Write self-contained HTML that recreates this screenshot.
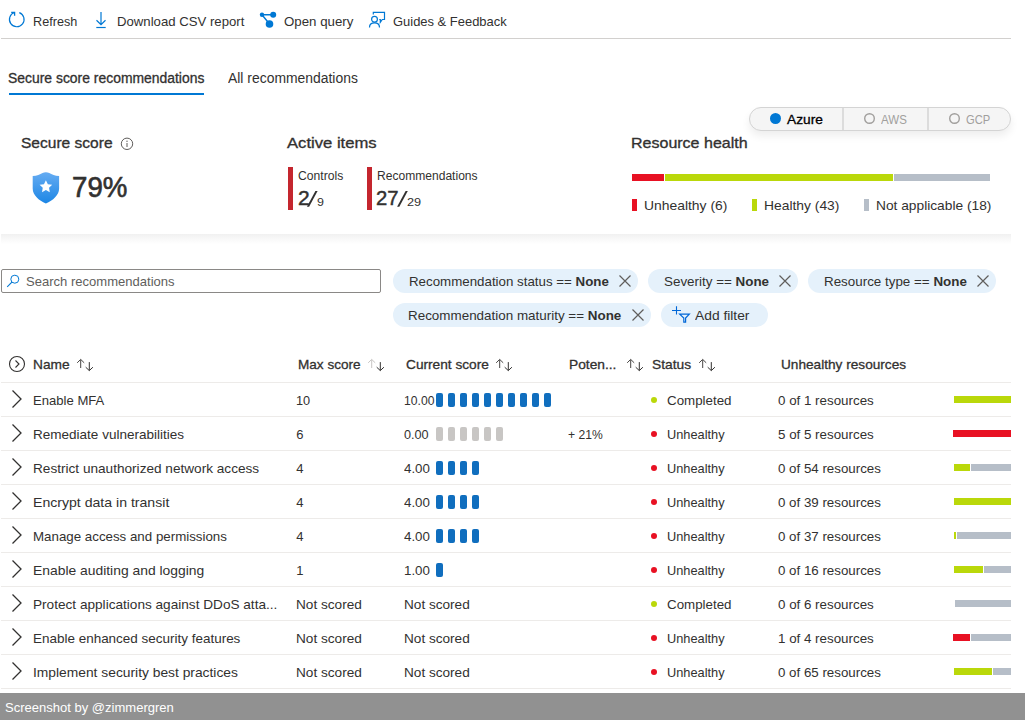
<!DOCTYPE html>
<html><head><meta charset="utf-8"><title>Secure score recommendations</title>
<style>
html,body{margin:0;padding:0;background:#fff;width:1025px;height:720px;overflow:hidden;position:relative;font-family:"Liberation Sans",sans-serif;}
.t{position:absolute;white-space:nowrap;transform-origin:0 0;}
.r{position:absolute;}
</style></head><body>
<!-- toolbar icons -->
<svg class="r" style="left:7px;top:10px" width="20" height="20" viewBox="0 0 20 20">
  <path d="M12.3 2.6 A7.3 7.3 0 1 1 7.5 2.5" fill="none" stroke="#0078d4" stroke-width="1.2"/>
  <path d="M4.2 2.4 H7.6 V5.8" fill="none" stroke="#0078d4" stroke-width="1.3"/>
</svg>
<svg class="r" style="left:94px;top:10px" width="14" height="20" viewBox="0 0 14 20">
  <path d="M7 2 V14.3 M2.5 10.3 L7 14.6 L11.5 10.3" fill="none" stroke="#0078d4" stroke-width="1.2"/>
  <path d="M2.3 17.5 H11.7" fill="none" stroke="#0078d4" stroke-width="1.2"/>
</svg>
<svg class="r" style="left:258px;top:10px" width="20" height="20" viewBox="0 0 20 20">
  <path d="M4 4.8 H15.2 M4 4.8 L11.5 14" fill="none" stroke="#0078d4" stroke-width="1.4"/>
  <circle cx="4" cy="4.8" r="2.2" fill="#0078d4"/>
  <circle cx="15.2" cy="4.8" r="3" fill="#0078d4"/>
  <circle cx="11.5" cy="14" r="3.8" fill="#0078d4"/>
</svg>
<svg class="r" style="left:367px;top:10px" width="20" height="20" viewBox="0 0 20 20">
  <path d="M6.3 4.6 V2.3 H17.5 V9.5 H15.3 L13.3 12.3 V9.5 H12.3" fill="none" stroke="#0078d4" stroke-width="1.2"/>
  <circle cx="7.5" cy="9.2" r="2.9" fill="none" stroke="#0078d4" stroke-width="1.2"/>
  <path d="M2.5 17.4 C2.5 14.5 4.5 12.9 7.5 12.9 C10.5 12.9 12.5 14.5 12.5 17.4" fill="none" stroke="#0078d4" stroke-width="1.2"/>
</svg>
<div class="r" style="left:1px;top:38px;width:1010px;height:1px;background:#d2d0ce"></div>
<!-- tab underline -->
<div class="r" style="left:9px;top:93px;width:195px;height:2px;background:#0078d4"></div>
<!-- card shadow -->
<div class="r" style="left:1px;top:234px;width:1010px;height:10px;background:linear-gradient(#f1f1f1,#fff)"></div>
<!-- info icon -->
<svg class="r" style="left:120px;top:137px" width="14" height="14" viewBox="0 0 14 14">
  <circle cx="7" cy="6.8" r="5.7" fill="none" stroke="#605e5c" stroke-width="1"/>
  <path d="M7 6 V10" stroke="#605e5c" stroke-width="1"/>
  <circle cx="7" cy="4.3" r="0.7" fill="#605e5c"/>
</svg>
<!-- shield -->
<svg class="r" style="left:32px;top:171px" width="28" height="34" viewBox="0 0 28 34">
  <defs><linearGradient id="sg" x1="0" y1="0" x2="0" y2="1"><stop offset="0" stop-color="#66acf2"/><stop offset="1" stop-color="#1c86e5"/></linearGradient></defs>
  <path d="M0.7 5 C5 5 8 3.5 10.5 2 C12.5 0.9 15.3 0.9 17.3 2 C19.8 3.5 23 5 27.1 5 V17.5 C27.1 24 21 29.5 13.9 32.6 C6.8 29.5 0.7 24 0.7 17.5 Z" fill="url(#sg)"/>
  <path d="M13.90 9.20 L15.84 13.13 L20.18 13.76 L17.04 16.82 L17.78 21.14 L13.90 19.10 L10.02 21.14 L10.76 16.82 L7.62 13.76 L11.96 13.13 Z" fill="#fff"/>
</svg>
<!-- active items bars -->
<svg class="r" style="left:0;top:0" width="450" height="220"><path d="M306.9 206.7 H309.1 L317.6 190.9 H315.4 Z" fill="#323130"/><path d="M397.1 206.7 H399.3 L407.8 190.9 H405.6 Z" fill="#323130"/></svg>
<div class="r" style="left:288px;top:167px;width:5px;height:43px;background:#c4262e"></div>
<div class="r" style="left:367px;top:167px;width:5px;height:43px;background:#c4262e"></div>
<!-- resource health bar -->
<div class="r" style="left:632px;top:174px;width:32px;height:7px;background:#e81123"></div>
<div class="r" style="left:665px;top:174px;width:228px;height:7px;background:#bad80a"></div>
<div class="r" style="left:894px;top:174px;width:96px;height:7px;background:#b6bec8"></div>
<div class="r" style="left:632px;top:199px;width:5px;height:12px;background:#e81123"></div>
<div class="r" style="left:752px;top:199px;width:5px;height:12px;background:#bad80a"></div>
<div class="r" style="left:864px;top:199px;width:5px;height:12px;background:#b6bec8"></div>
<!-- cloud toggle -->
<div class="r" style="left:749px;top:107px;width:260px;height:22px;border:1px solid #d4d4d4;border-radius:12px;background:#f5f5f5;box-shadow:0 5px 9px rgba(0,0,0,0.07)"></div>
<div class="r" style="left:842px;top:108px;width:2px;height:22px;background:#dcdcdc"></div>
<div class="r" style="left:927px;top:108px;width:2px;height:22px;background:#dcdcdc"></div>
<div class="r" style="left:770px;top:113px;width:11px;height:11px;border-radius:6px;background:#0078d4"></div>
<svg class="r" style="left:863px;top:112px" width="13" height="13" viewBox="0 0 13 13"><circle cx="6.5" cy="6.5" r="4.8" fill="none" stroke="#a19f9d" stroke-width="1.4"/></svg>
<svg class="r" style="left:948px;top:112px" width="13" height="13" viewBox="0 0 13 13"><circle cx="6.5" cy="6.5" r="4.8" fill="none" stroke="#a19f9d" stroke-width="1.4"/></svg>
<!-- search box -->
<div class="r" style="left:1px;top:269px;width:378px;height:22px;border:1px solid #8a8886;border-radius:2px"></div>
<svg class="r" style="left:6px;top:274px" width="14" height="14" viewBox="0 0 14 14">
  <circle cx="8.8" cy="5.2" r="4" fill="none" stroke="#0078d4" stroke-width="1"/>
  <path d="M5.9 8.1 L1.2 12.8" stroke="#0078d4" stroke-width="1.1"/>
</svg>
<!-- filter pills -->
<div class="r" style="left:393px;top:269px;width:245px;height:24px;border-radius:12px;background:#e5f1fb"></div>
<div class="r" style="left:648px;top:269px;width:150px;height:24px;border-radius:12px;background:#e5f1fb"></div>
<div class="r" style="left:808px;top:269px;width:188px;height:24px;border-radius:12px;background:#e5f1fb"></div>
<div class="r" style="left:393px;top:303px;width:258px;height:24px;border-radius:12px;background:#e5f1fb"></div>
<div class="r" style="left:661px;top:303px;width:107px;height:24px;border-radius:12px;background:#e5f1fb"></div>
<svg class="r" style="left:619px;top:275px" width="12" height="12" viewBox="0 0 12 12"><path d="M0.5 0.5 L11.5 11.5 M11.5 0.5 L0.5 11.5" stroke="#605e5c" stroke-width="1.2"/></svg>
<svg class="r" style="left:779px;top:275px" width="12" height="12" viewBox="0 0 12 12"><path d="M0.5 0.5 L11.5 11.5 M11.5 0.5 L0.5 11.5" stroke="#605e5c" stroke-width="1.2"/></svg>
<svg class="r" style="left:977px;top:275px" width="12" height="12" viewBox="0 0 12 12"><path d="M0.5 0.5 L11.5 11.5 M11.5 0.5 L0.5 11.5" stroke="#605e5c" stroke-width="1.2"/></svg>
<svg class="r" style="left:632px;top:309px" width="12" height="12" viewBox="0 0 12 12"><path d="M0.5 0.5 L11.5 11.5 M11.5 0.5 L0.5 11.5" stroke="#605e5c" stroke-width="1.2"/></svg>
<svg class="r" style="left:671px;top:305px" width="20" height="18" viewBox="0 0 20 18">
  <path d="M5.5 1.2 V9.6 M1 5.5 H10" stroke="#0067d8" stroke-width="1.1"/>
  <path d="M8.7 9.1 H18.3 L14.6 13 V17.1 H12.8 V13 Z" fill="none" stroke="#0067d8" stroke-width="1.2" stroke-linejoin="miter"/>
</svg>
<!-- table header -->
<svg class="r" style="left:8px;top:355px" width="18" height="18" viewBox="0 0 18 18">
  <circle cx="9" cy="9" r="7.5" fill="none" stroke="#323130" stroke-width="1.1"/>
  <path d="M7.5 5.5 L11 9 L7.5 12.5" fill="none" stroke="#323130" stroke-width="1.1"/>
</svg>
<svg class="r" style="left:76px;top:358px" width="18" height="14" viewBox="0 0 18 14">
  <path d="M4.7 1.8 V10 M1.2 4.8 L4.7 1.4 L8.2 4.8" fill="none" stroke="#484644" stroke-width="1"/>
  <path d="M13.3 4.1 V12.5 M9.7 9.2 L13.3 12.6 L16.9 9.2" fill="none" stroke="#323130" stroke-width="1"/>
</svg>
<svg class="r" style="left:367px;top:358px" width="18" height="14" viewBox="0 0 18 14">
  <path d="M4.7 1.8 V10 M1.2 4.8 L4.7 1.4 L8.2 4.8" fill="none" stroke="#c8c6c4" stroke-width="1"/>
  <path d="M13.3 4.1 V12.5 M9.7 9.2 L13.3 12.6 L16.9 9.2" fill="none" stroke="#323130" stroke-width="1"/>
</svg>
<svg class="r" style="left:494.8px;top:358px" width="18" height="14" viewBox="0 0 18 14">
  <path d="M4.7 1.8 V10 M1.2 4.8 L4.7 1.4 L8.2 4.8" fill="none" stroke="#484644" stroke-width="1"/>
  <path d="M13.3 4.1 V12.5 M9.7 9.2 L13.3 12.6 L16.9 9.2" fill="none" stroke="#323130" stroke-width="1"/>
</svg>
<svg class="r" style="left:625.7px;top:358px" width="18" height="14" viewBox="0 0 18 14">
  <path d="M4.7 1.8 V10 M1.2 4.8 L4.7 1.4 L8.2 4.8" fill="none" stroke="#484644" stroke-width="1"/>
  <path d="M13.3 4.1 V12.5 M9.7 9.2 L13.3 12.6 L16.9 9.2" fill="none" stroke="#323130" stroke-width="1"/>
</svg>
<svg class="r" style="left:697.7px;top:358px" width="18" height="14" viewBox="0 0 18 14">
  <path d="M4.7 1.8 V10 M1.2 4.8 L4.7 1.4 L8.2 4.8" fill="none" stroke="#484644" stroke-width="1"/>
  <path d="M13.3 4.1 V12.5 M9.7 9.2 L13.3 12.6 L16.9 9.2" fill="none" stroke="#323130" stroke-width="1"/>
</svg>
<div class="r" style="left:1px;top:382px;width:1010px;height:1px;background:#edebe9"></div>
<!-- footer -->
<div class="r" style="left:0;top:693px;width:1025px;height:27px;background:#919191"></div>

<div class="r" style="left:954px;top:396px;width:57px;height:7px;background:#bad80a"></div>
<div class="r" style="left:953px;top:430px;width:58px;height:7px;background:#e81123"></div>
<div class="r" style="left:954px;top:464px;width:16px;height:7px;background:#bad80a"></div>
<div class="r" style="left:971px;top:464px;width:40px;height:7px;background:#b6bec8"></div>
<div class="r" style="left:954px;top:498px;width:57px;height:7px;background:#bad80a"></div>
<div class="r" style="left:954px;top:532px;width:2px;height:7px;background:#bad80a"></div>
<div class="r" style="left:957px;top:532px;width:54px;height:7px;background:#b6bec8"></div>
<div class="r" style="left:954px;top:566px;width:29px;height:7px;background:#bad80a"></div>
<div class="r" style="left:984px;top:566px;width:27px;height:7px;background:#b6bec8"></div>
<div class="r" style="left:955px;top:600px;width:56px;height:7px;background:#b6bec8"></div>
<div class="r" style="left:953px;top:634px;width:17px;height:7px;background:#e81123"></div>
<div class="r" style="left:971px;top:634px;width:40px;height:7px;background:#b6bec8"></div>
<div class="r" style="left:954px;top:668px;width:38px;height:7px;background:#bad80a"></div>
<div class="r" style="left:993px;top:668px;width:18px;height:7px;background:#b6bec8"></div>
<div class="r" style="left:436px;top:393px;width:7px;height:14px;border-radius:2px;background:#106ebe"></div>
<div class="r" style="left:448px;top:393px;width:7px;height:14px;border-radius:2px;background:#106ebe"></div>
<div class="r" style="left:460px;top:393px;width:7px;height:14px;border-radius:2px;background:#106ebe"></div>
<div class="r" style="left:472px;top:393px;width:7px;height:14px;border-radius:2px;background:#106ebe"></div>
<div class="r" style="left:484px;top:393px;width:7px;height:14px;border-radius:2px;background:#106ebe"></div>
<div class="r" style="left:496px;top:393px;width:7px;height:14px;border-radius:2px;background:#106ebe"></div>
<div class="r" style="left:508px;top:393px;width:7px;height:14px;border-radius:2px;background:#106ebe"></div>
<div class="r" style="left:520px;top:393px;width:7px;height:14px;border-radius:2px;background:#106ebe"></div>
<div class="r" style="left:532px;top:393px;width:7px;height:14px;border-radius:2px;background:#106ebe"></div>
<div class="r" style="left:544px;top:393px;width:7px;height:14px;border-radius:2px;background:#106ebe"></div>
<svg class="r" style="left:11px;top:389px" width="12" height="20" viewBox="0 0 12 20"><path d="M1.5 1.5 L10 10 L1.5 18.5" fill="none" stroke="#323130" stroke-width="1.3"/></svg>
<div class="r" style="left:651px;top:397px;width:6px;height:6px;border-radius:3px;background:#bad80a"></div>
<div class="r" style="left:1px;top:416px;width:1010px;height:1px;background:#edebe9"></div>
<div class="r" style="left:436px;top:427px;width:7px;height:14px;border-radius:2px;background:#c8c6c4"></div>
<div class="r" style="left:448px;top:427px;width:7px;height:14px;border-radius:2px;background:#c8c6c4"></div>
<div class="r" style="left:460px;top:427px;width:7px;height:14px;border-radius:2px;background:#c8c6c4"></div>
<div class="r" style="left:472px;top:427px;width:7px;height:14px;border-radius:2px;background:#c8c6c4"></div>
<div class="r" style="left:484px;top:427px;width:7px;height:14px;border-radius:2px;background:#c8c6c4"></div>
<div class="r" style="left:496px;top:427px;width:7px;height:14px;border-radius:2px;background:#c8c6c4"></div>
<svg class="r" style="left:11px;top:423px" width="12" height="20" viewBox="0 0 12 20"><path d="M1.5 1.5 L10 10 L1.5 18.5" fill="none" stroke="#323130" stroke-width="1.3"/></svg>
<div class="r" style="left:651px;top:431px;width:6px;height:6px;border-radius:3px;background:#e81123"></div>
<div class="r" style="left:1px;top:450px;width:1010px;height:1px;background:#edebe9"></div>
<div class="r" style="left:436px;top:461px;width:7px;height:14px;border-radius:2px;background:#106ebe"></div>
<div class="r" style="left:448px;top:461px;width:7px;height:14px;border-radius:2px;background:#106ebe"></div>
<div class="r" style="left:460px;top:461px;width:7px;height:14px;border-radius:2px;background:#106ebe"></div>
<div class="r" style="left:472px;top:461px;width:7px;height:14px;border-radius:2px;background:#106ebe"></div>
<svg class="r" style="left:11px;top:457px" width="12" height="20" viewBox="0 0 12 20"><path d="M1.5 1.5 L10 10 L1.5 18.5" fill="none" stroke="#323130" stroke-width="1.3"/></svg>
<div class="r" style="left:651px;top:465px;width:6px;height:6px;border-radius:3px;background:#e81123"></div>
<div class="r" style="left:1px;top:484px;width:1010px;height:1px;background:#edebe9"></div>
<div class="r" style="left:436px;top:495px;width:7px;height:14px;border-radius:2px;background:#106ebe"></div>
<div class="r" style="left:448px;top:495px;width:7px;height:14px;border-radius:2px;background:#106ebe"></div>
<div class="r" style="left:460px;top:495px;width:7px;height:14px;border-radius:2px;background:#106ebe"></div>
<div class="r" style="left:472px;top:495px;width:7px;height:14px;border-radius:2px;background:#106ebe"></div>
<svg class="r" style="left:11px;top:491px" width="12" height="20" viewBox="0 0 12 20"><path d="M1.5 1.5 L10 10 L1.5 18.5" fill="none" stroke="#323130" stroke-width="1.3"/></svg>
<div class="r" style="left:651px;top:499px;width:6px;height:6px;border-radius:3px;background:#e81123"></div>
<div class="r" style="left:1px;top:518px;width:1010px;height:1px;background:#edebe9"></div>
<div class="r" style="left:436px;top:529px;width:7px;height:14px;border-radius:2px;background:#106ebe"></div>
<div class="r" style="left:448px;top:529px;width:7px;height:14px;border-radius:2px;background:#106ebe"></div>
<div class="r" style="left:460px;top:529px;width:7px;height:14px;border-radius:2px;background:#106ebe"></div>
<div class="r" style="left:472px;top:529px;width:7px;height:14px;border-radius:2px;background:#106ebe"></div>
<svg class="r" style="left:11px;top:525px" width="12" height="20" viewBox="0 0 12 20"><path d="M1.5 1.5 L10 10 L1.5 18.5" fill="none" stroke="#323130" stroke-width="1.3"/></svg>
<div class="r" style="left:651px;top:533px;width:6px;height:6px;border-radius:3px;background:#e81123"></div>
<div class="r" style="left:1px;top:552px;width:1010px;height:1px;background:#edebe9"></div>
<div class="r" style="left:436px;top:563px;width:7px;height:14px;border-radius:2px;background:#106ebe"></div>
<svg class="r" style="left:11px;top:559px" width="12" height="20" viewBox="0 0 12 20"><path d="M1.5 1.5 L10 10 L1.5 18.5" fill="none" stroke="#323130" stroke-width="1.3"/></svg>
<div class="r" style="left:651px;top:567px;width:6px;height:6px;border-radius:3px;background:#e81123"></div>
<div class="r" style="left:1px;top:586px;width:1010px;height:1px;background:#edebe9"></div>
<svg class="r" style="left:11px;top:593px" width="12" height="20" viewBox="0 0 12 20"><path d="M1.5 1.5 L10 10 L1.5 18.5" fill="none" stroke="#323130" stroke-width="1.3"/></svg>
<div class="r" style="left:651px;top:601px;width:6px;height:6px;border-radius:3px;background:#bad80a"></div>
<div class="r" style="left:1px;top:620px;width:1010px;height:1px;background:#edebe9"></div>
<svg class="r" style="left:11px;top:627px" width="12" height="20" viewBox="0 0 12 20"><path d="M1.5 1.5 L10 10 L1.5 18.5" fill="none" stroke="#323130" stroke-width="1.3"/></svg>
<div class="r" style="left:651px;top:635px;width:6px;height:6px;border-radius:3px;background:#e81123"></div>
<div class="r" style="left:1px;top:654px;width:1010px;height:1px;background:#edebe9"></div>
<svg class="r" style="left:11px;top:661px" width="12" height="20" viewBox="0 0 12 20"><path d="M1.5 1.5 L10 10 L1.5 18.5" fill="none" stroke="#323130" stroke-width="1.3"/></svg>
<div class="r" style="left:651px;top:669px;width:6px;height:6px;border-radius:3px;background:#e81123"></div>
<div class="r" style="left:1px;top:688px;width:1010px;height:1px;background:#edebe9"></div>
<div class="t" style="left:32.98px;top:15.00px;font-size:13px;line-height:13px;font-weight:400;color:#323130;transform:scaleX(0.9722);">Refresh</div>
<div class="t" style="left:116.88px;top:15.00px;font-size:13px;line-height:13px;font-weight:400;color:#323130;transform:scaleX(1.0126);">Download CSV report</div>
<div class="t" style="left:283.98px;top:15.00px;font-size:13px;line-height:13px;font-weight:400;color:#323130;transform:scaleX(1.0204);">Open query</div>
<div class="t" style="left:393.08px;top:15.00px;font-size:13px;line-height:13px;font-weight:400;color:#323130;transform:scaleX(0.9957);">Guides &amp; Feedback</div>
<div class="t" style="left:8.44px;top:71.15px;font-size:14px;line-height:14px;font-weight:400;color:#323130;transform:scaleX(0.9936);-webkit-text-stroke:0.31px #323130;">Secure score recommendations</div>
<div class="t" style="left:227.64px;top:71.15px;font-size:14px;line-height:14px;font-weight:400;color:#323130;transform:scaleX(0.9935);">All recommendations</div>
<div class="t" style="left:20.80px;top:135.30px;font-size:15px;line-height:15px;font-weight:400;color:#323130;transform:scaleX(1.0360);-webkit-text-stroke:0.33px #323130;">Secure score</div>
<div class="t" style="left:72.24px;top:172.75px;font-size:29px;line-height:29px;font-weight:400;color:#323130;transform:scaleX(0.9538);-webkit-text-stroke:0.64px #323130;">79%</div>
<div class="t" style="left:287.40px;top:135.30px;font-size:15px;line-height:15px;font-weight:400;color:#323130;transform:scaleX(1.1089);-webkit-text-stroke:0.33px #323130;">Active items</div>
<div class="t" style="left:297.50px;top:170.42px;font-size:12.5px;line-height:12.5px;font-weight:400;color:#323130;transform:scaleX(0.9714);">Controls</div>
<div class="t" style="left:297.62px;top:188.99px;font-size:19.5px;line-height:19.5px;font-weight:400;color:#323130;transform:scaleX(1.0775);-webkit-text-stroke:0.43px #323130;">2</div>
<div class="t" style="left:317.46px;top:197.19px;font-size:11px;line-height:11px;font-weight:400;color:#323130;transform:scaleX(1.1343);">9</div>
<div class="t" style="left:376.80px;top:170.42px;font-size:12.5px;line-height:12.5px;font-weight:400;color:#323130;transform:scaleX(0.9653);">Recommendations</div>
<div class="t" style="left:376.22px;top:188.99px;font-size:19.5px;line-height:19.5px;font-weight:400;color:#323130;transform:scaleX(1.0378);-webkit-text-stroke:0.43px #323130;">27</div>
<div class="t" style="left:407.04px;top:196.77px;font-size:11.5px;line-height:11.5px;font-weight:400;color:#323130;transform:scaleX(1.1076);">29</div>
<div class="t" style="left:631.40px;top:135.30px;font-size:15px;line-height:15px;font-weight:400;color:#323130;transform:scaleX(1.0674);-webkit-text-stroke:0.33px #323130;">Resource health</div>
<div class="t" style="left:643.88px;top:198.70px;font-size:13px;line-height:13px;font-weight:400;color:#323130;transform:scaleX(1.0684);">Unhealthy (6)</div>
<div class="t" style="left:764.18px;top:198.70px;font-size:13px;line-height:13px;font-weight:400;color:#323130;transform:scaleX(1.0646);">Healthy (43)</div>
<div class="t" style="left:875.88px;top:198.70px;font-size:13px;line-height:13px;font-weight:400;color:#323130;transform:scaleX(1.0573);">Not applicable (18)</div>
<div class="t" style="left:786.78px;top:113.00px;font-size:13px;line-height:13px;font-weight:400;color:#000;transform:scaleX(1.0561);-webkit-text-stroke:0.29px #000;">Azure</div>
<div class="t" style="left:880.98px;top:113.00px;font-size:13px;line-height:13px;font-weight:400;color:#a19f9d;transform:scaleX(0.8872);">AWS</div>
<div class="t" style="left:965.78px;top:113.00px;font-size:13px;line-height:13px;font-weight:400;color:#a19f9d;transform:scaleX(0.8596);">GCP</div>
<div class="t" style="left:25.78px;top:275.00px;font-size:13px;line-height:13px;font-weight:400;color:#605e5c;transform:scaleX(1.0031);">Search recommendations</div>
<div class="t" style="left:408.98px;top:275.00px;font-size:13px;line-height:13px;font-weight:400;color:#323130;transform:scaleX(1.0243);">Recommendation status == <b>None</b></div>
<div class="t" style="left:663.68px;top:275.00px;font-size:13px;line-height:13px;font-weight:400;color:#323130;transform:scaleX(1.0311);">Severity == <b>None</b></div>
<div class="t" style="left:823.78px;top:275.00px;font-size:13px;line-height:13px;font-weight:400;color:#323130;transform:scaleX(1.0296);">Resource type == <b>None</b></div>
<div class="t" style="left:408.48px;top:309.00px;font-size:13px;line-height:13px;font-weight:400;color:#323130;transform:scaleX(1.0324);">Recommendation maturity == <b>None</b></div>
<div class="t" style="left:694.88px;top:309.00px;font-size:13px;line-height:13px;font-weight:400;color:#323130;transform:scaleX(1.0617);">Add filter</div>
<div class="t" style="left:32.98px;top:358.00px;font-size:13px;line-height:13px;font-weight:400;color:#323130;transform:scaleX(1.0543);-webkit-text-stroke:0.29px #323130;">Name</div>
<div class="t" style="left:298.08px;top:358.00px;font-size:13px;line-height:13px;font-weight:400;color:#323130;transform:scaleX(1.0431);-webkit-text-stroke:0.29px #323130;">Max score</div>
<div class="t" style="left:405.68px;top:358.00px;font-size:13px;line-height:13px;font-weight:400;color:#323130;transform:scaleX(1.0523);-webkit-text-stroke:0.29px #323130;">Current score</div>
<div class="t" style="left:568.98px;top:358.00px;font-size:13px;line-height:13px;font-weight:400;color:#323130;transform:scaleX(1.0572);-webkit-text-stroke:0.29px #323130;">Poten...</div>
<div class="t" style="left:652.48px;top:358.00px;font-size:13px;line-height:13px;font-weight:400;color:#323130;transform:scaleX(1.0602);-webkit-text-stroke:0.29px #323130;">Status</div>
<div class="t" style="left:780.78px;top:358.00px;font-size:13px;line-height:13px;font-weight:400;color:#323130;transform:scaleX(1.0489);-webkit-text-stroke:0.29px #323130;">Unhealthy resources</div>
<div class="t" style="left:32.98px;top:394.00px;font-size:13px;line-height:13px;font-weight:400;color:#323130;transform:scaleX(1.0068);">Enable MFA</div>
<div class="t" style="left:296.28px;top:394.00px;font-size:13px;line-height:13px;font-weight:400;color:#323130;transform:scaleX(0.9796);">10</div>
<div class="t" style="left:404.48px;top:394.00px;font-size:13px;line-height:13px;font-weight:400;color:#323130;transform:scaleX(0.9345);">10.00</div>
<div class="t" style="left:666.88px;top:394.00px;font-size:13px;line-height:13px;font-weight:400;color:#323130;transform:scaleX(1.0264);">Completed</div>
<div class="t" style="left:778.48px;top:394.00px;font-size:13px;line-height:13px;font-weight:400;color:#323130;transform:scaleX(1.0270);">0 of 1 resources</div>
<div class="t" style="left:32.98px;top:428.00px;font-size:13px;line-height:13px;font-weight:400;color:#323130;transform:scaleX(1.0399);">Remediate vulnerabilities</div>
<div class="t" style="left:296.28px;top:428.00px;font-size:13px;line-height:13px;font-weight:400;color:#323130;">6</div>
<div class="t" style="left:404.48px;top:428.00px;font-size:13px;line-height:13px;font-weight:400;color:#323130;transform:scaleX(0.9745);">0.00</div>
<div class="t" style="left:567.98px;top:428.00px;font-size:13px;line-height:13px;font-weight:400;color:#323130;transform:scaleX(0.9323);">+ 21%</div>
<div class="t" style="left:666.88px;top:428.00px;font-size:13px;line-height:13px;font-weight:400;color:#323130;transform:scaleX(0.9835);">Unhealthy</div>
<div class="t" style="left:778.48px;top:428.00px;font-size:13px;line-height:13px;font-weight:400;color:#323130;transform:scaleX(1.0270);">5 of 5 resources</div>
<div class="t" style="left:32.98px;top:462.00px;font-size:13px;line-height:13px;font-weight:400;color:#323130;transform:scaleX(1.0468);">Restrict unauthorized network access</div>
<div class="t" style="left:296.28px;top:462.00px;font-size:13px;line-height:13px;font-weight:400;color:#323130;">4</div>
<div class="t" style="left:404.48px;top:462.00px;font-size:13px;line-height:13px;font-weight:400;color:#323130;transform:scaleX(1.0245);">4.00</div>
<div class="t" style="left:666.88px;top:462.00px;font-size:13px;line-height:13px;font-weight:400;color:#323130;transform:scaleX(0.9835);">Unhealthy</div>
<div class="t" style="left:778.48px;top:462.00px;font-size:13px;line-height:13px;font-weight:400;color:#323130;transform:scaleX(1.0247);">0 of 54 resources</div>
<div class="t" style="left:32.98px;top:496.00px;font-size:13px;line-height:13px;font-weight:400;color:#323130;transform:scaleX(1.0841);">Encrypt data in transit</div>
<div class="t" style="left:296.28px;top:496.00px;font-size:13px;line-height:13px;font-weight:400;color:#323130;">4</div>
<div class="t" style="left:404.48px;top:496.00px;font-size:13px;line-height:13px;font-weight:400;color:#323130;transform:scaleX(1.0245);">4.00</div>
<div class="t" style="left:666.88px;top:496.00px;font-size:13px;line-height:13px;font-weight:400;color:#323130;transform:scaleX(0.9835);">Unhealthy</div>
<div class="t" style="left:778.48px;top:496.00px;font-size:13px;line-height:13px;font-weight:400;color:#323130;transform:scaleX(1.0247);">0 of 39 resources</div>
<div class="t" style="left:32.98px;top:530.00px;font-size:13px;line-height:13px;font-weight:400;color:#323130;transform:scaleX(1.0243);">Manage access and permissions</div>
<div class="t" style="left:296.28px;top:530.00px;font-size:13px;line-height:13px;font-weight:400;color:#323130;">4</div>
<div class="t" style="left:404.48px;top:530.00px;font-size:13px;line-height:13px;font-weight:400;color:#323130;transform:scaleX(1.0245);">4.00</div>
<div class="t" style="left:666.88px;top:530.00px;font-size:13px;line-height:13px;font-weight:400;color:#323130;transform:scaleX(0.9835);">Unhealthy</div>
<div class="t" style="left:778.48px;top:530.00px;font-size:13px;line-height:13px;font-weight:400;color:#323130;transform:scaleX(1.0247);">0 of 37 resources</div>
<div class="t" style="left:32.98px;top:564.00px;font-size:13px;line-height:13px;font-weight:400;color:#323130;transform:scaleX(1.0668);">Enable auditing and logging</div>
<div class="t" style="left:296.28px;top:564.00px;font-size:13px;line-height:13px;font-weight:400;color:#323130;">1</div>
<div class="t" style="left:404.48px;top:564.00px;font-size:13px;line-height:13px;font-weight:400;color:#323130;transform:scaleX(1.0245);">1.00</div>
<div class="t" style="left:666.88px;top:564.00px;font-size:13px;line-height:13px;font-weight:400;color:#323130;transform:scaleX(0.9835);">Unhealthy</div>
<div class="t" style="left:778.48px;top:564.00px;font-size:13px;line-height:13px;font-weight:400;color:#323130;transform:scaleX(1.0247);">0 of 16 resources</div>
<div class="t" style="left:32.98px;top:598.00px;font-size:13px;line-height:13px;font-weight:400;color:#323130;transform:scaleX(1.0469);">Protect applications against DDoS atta...</div>
<div class="t" style="left:296.38px;top:598.00px;font-size:13px;line-height:13px;font-weight:400;color:#323130;transform:scaleX(1.0475);">Not scored</div>
<div class="t" style="left:404.28px;top:598.00px;font-size:13px;line-height:13px;font-weight:400;color:#323130;transform:scaleX(1.0459);">Not scored</div>
<div class="t" style="left:666.88px;top:598.00px;font-size:13px;line-height:13px;font-weight:400;color:#323130;transform:scaleX(1.0264);">Completed</div>
<div class="t" style="left:778.48px;top:598.00px;font-size:13px;line-height:13px;font-weight:400;color:#323130;transform:scaleX(1.0270);">0 of 6 resources</div>
<div class="t" style="left:32.98px;top:632.00px;font-size:13px;line-height:13px;font-weight:400;color:#323130;transform:scaleX(1.0358);">Enable enhanced security features</div>
<div class="t" style="left:296.38px;top:632.00px;font-size:13px;line-height:13px;font-weight:400;color:#323130;transform:scaleX(1.0475);">Not scored</div>
<div class="t" style="left:404.28px;top:632.00px;font-size:13px;line-height:13px;font-weight:400;color:#323130;transform:scaleX(1.0459);">Not scored</div>
<div class="t" style="left:666.88px;top:632.00px;font-size:13px;line-height:13px;font-weight:400;color:#323130;transform:scaleX(0.9835);">Unhealthy</div>
<div class="t" style="left:778.48px;top:632.00px;font-size:13px;line-height:13px;font-weight:400;color:#323130;transform:scaleX(1.0270);">1 of 4 resources</div>
<div class="t" style="left:32.98px;top:666.00px;font-size:13px;line-height:13px;font-weight:400;color:#323130;transform:scaleX(1.0621);">Implement security best practices</div>
<div class="t" style="left:296.38px;top:666.00px;font-size:13px;line-height:13px;font-weight:400;color:#323130;transform:scaleX(1.0475);">Not scored</div>
<div class="t" style="left:404.28px;top:666.00px;font-size:13px;line-height:13px;font-weight:400;color:#323130;transform:scaleX(1.0459);">Not scored</div>
<div class="t" style="left:666.88px;top:666.00px;font-size:13px;line-height:13px;font-weight:400;color:#323130;transform:scaleX(0.9835);">Unhealthy</div>
<div class="t" style="left:778.48px;top:666.00px;font-size:13px;line-height:13px;font-weight:400;color:#323130;transform:scaleX(1.0247);">0 of 65 resources</div>
<div class="t" style="left:4.98px;top:700.50px;font-size:13px;line-height:13px;font-weight:400;color:#fff;transform:scaleX(1.0015);">Screenshot by @zimmergren</div>
</body></html>
